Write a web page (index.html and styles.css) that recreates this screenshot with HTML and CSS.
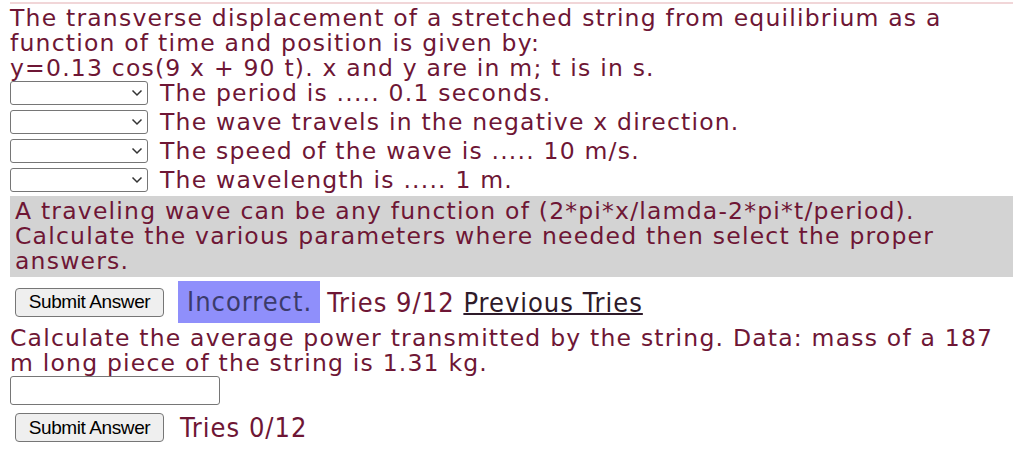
FILE: index.html
```html
<!DOCTYPE html>
<html>
<head>
<meta charset="utf-8">
<link rel="stylesheet" href="styles.css">
</head>
<body>
<div class="page">
  <div class="rule"></div>
  <div class="q">
    <p class="text">The transverse displacement of a stretched string from equilibrium as a function of time and position is given by:<br>y=0.13 cos(9 x + 90 t). x and y are in m; t is in s.</p>
    <div class="opts">
      <div class="opt"><div class="sel"><svg width="12" height="8" viewBox="0 0 12 8"><path d="M1.5 1.5 L6 6 L10.5 1.5" fill="none" stroke="#333" stroke-width="1.5"/></svg></div><span>The period is ..... 0.1 seconds.</span></div>
      <div class="opt"><div class="sel"><svg width="12" height="8" viewBox="0 0 12 8"><path d="M1.5 1.5 L6 6 L10.5 1.5" fill="none" stroke="#333" stroke-width="1.5"/></svg></div><span>The wave travels in the negative x direction.</span></div>
      <div class="opt"><div class="sel"><svg width="12" height="8" viewBox="0 0 12 8"><path d="M1.5 1.5 L6 6 L10.5 1.5" fill="none" stroke="#333" stroke-width="1.5"/></svg></div><span>The speed of the wave is ..... 10 m/s.</span></div>
      <div class="opt"><div class="sel"><svg width="12" height="8" viewBox="0 0 12 8"><path d="M1.5 1.5 L6 6 L10.5 1.5" fill="none" stroke="#333" stroke-width="1.5"/></svg></div><span>The wavelength is ..... 1 m.</span></div>
    </div>
    <div class="hint">A traveling wave can be any function of (2*pi*x/lamda-2*pi*t/period). Calculate the various parameters where needed then select the proper answers.</div>
    <div class="status">
      <button class="btn">Submit Answer</button>
      <span class="incorrect">Incorrect.</span>
      <span class="tries">Tries 9/12 <a class="prev">Previous Tries</a></span>
    </div>
  </div>
  <div class="q2">
    <p class="text">Calculate the average power transmitted by the string. Data: mass of a 187 m long piece of the string is 1.31 kg.</p>
    <div class="input"></div>
    <div class="status2">
      <button class="btn">Submit Answer</button>
      <span class="tries">Tries 0/12</span>
    </div>
  </div>
</div>
</body>
</html>
```

FILE: styles.css
```css
html, body {
  margin: 0;
  padding: 0;
  background: #ffffff;
}
.page {
  width: 1003px;
  padding-left: 10px;
  padding-top: 2px;
  font-family: "DejaVu Sans", Verdana, sans-serif;
  font-size: 23.5px;
  letter-spacing: 1.2px;
  color: #6e1635;
}
.rule {
  border-top: 2px solid #f1d6d8;
}
.text {
  margin: 2px 0 0 0;
  line-height: 25px;
}
.opts {
  display: flex;
  flex-direction: column;
  gap: 5px;
}
.opt {
  display: flex;
  align-items: center;
  height: 24px;
  line-height: 24px;
}
.sel {
  box-sizing: border-box;
  width: 138px;
  height: 24px;
  border: 1px solid #767676;
  border-radius: 3px;
  background: #fff;
  display: flex;
  align-items: center;
  justify-content: flex-end;
  padding-right: 4px;
  margin-right: 12px;
}
.hint {
  background: #d3d3d3;
  margin-top: 4px;
  padding: 3px 6px 3px 5px;
  line-height: 25px;
}
.status {
  display: flex;
  align-items: center;
  margin-top: 4px;
  height: 42px;
}
.btn {
  box-sizing: border-box;
  font-family: "Liberation Sans", Arial, sans-serif;
  font-size: 19px;
  color: #000;
  background: #efefef;
  border: 1px solid #767676;
  border-radius: 4px;
  width: 149px;
  height: 29px;
  margin-left: 5px;
  padding: 0;
  letter-spacing: -0.4px;
}
.incorrect {
  background: #8f8ffb;
  color: #3b3b6b;
  font-family: "DejaVu Sans Condensed", "DejaVu Sans", sans-serif;
  font-size: 27px;
  letter-spacing: 1px;
  height: 42px;
  line-height: 42px;
  padding: 0 8px 0 9px;
  margin-left: 14px;
}
.tries {
  font-family: "DejaVu Sans Condensed", "DejaVu Sans", sans-serif;
  font-size: 27px;
  letter-spacing: 1px;
  margin-left: 7px;
}
.prev {
  color: #2e1b2a;
  text-decoration: underline;
  text-decoration-thickness: 2px;
}
.q2 .text {
  margin-top: 3px;
}
.input {
  box-sizing: border-box;
  width: 210px;
  height: 29px;
  border: 1px solid #767676;
  border-radius: 3px;
}
.status2 {
  display: flex;
  align-items: center;
  margin-top: 7px;
}
.status2 .tries {
  margin-left: 16px;
}
```
